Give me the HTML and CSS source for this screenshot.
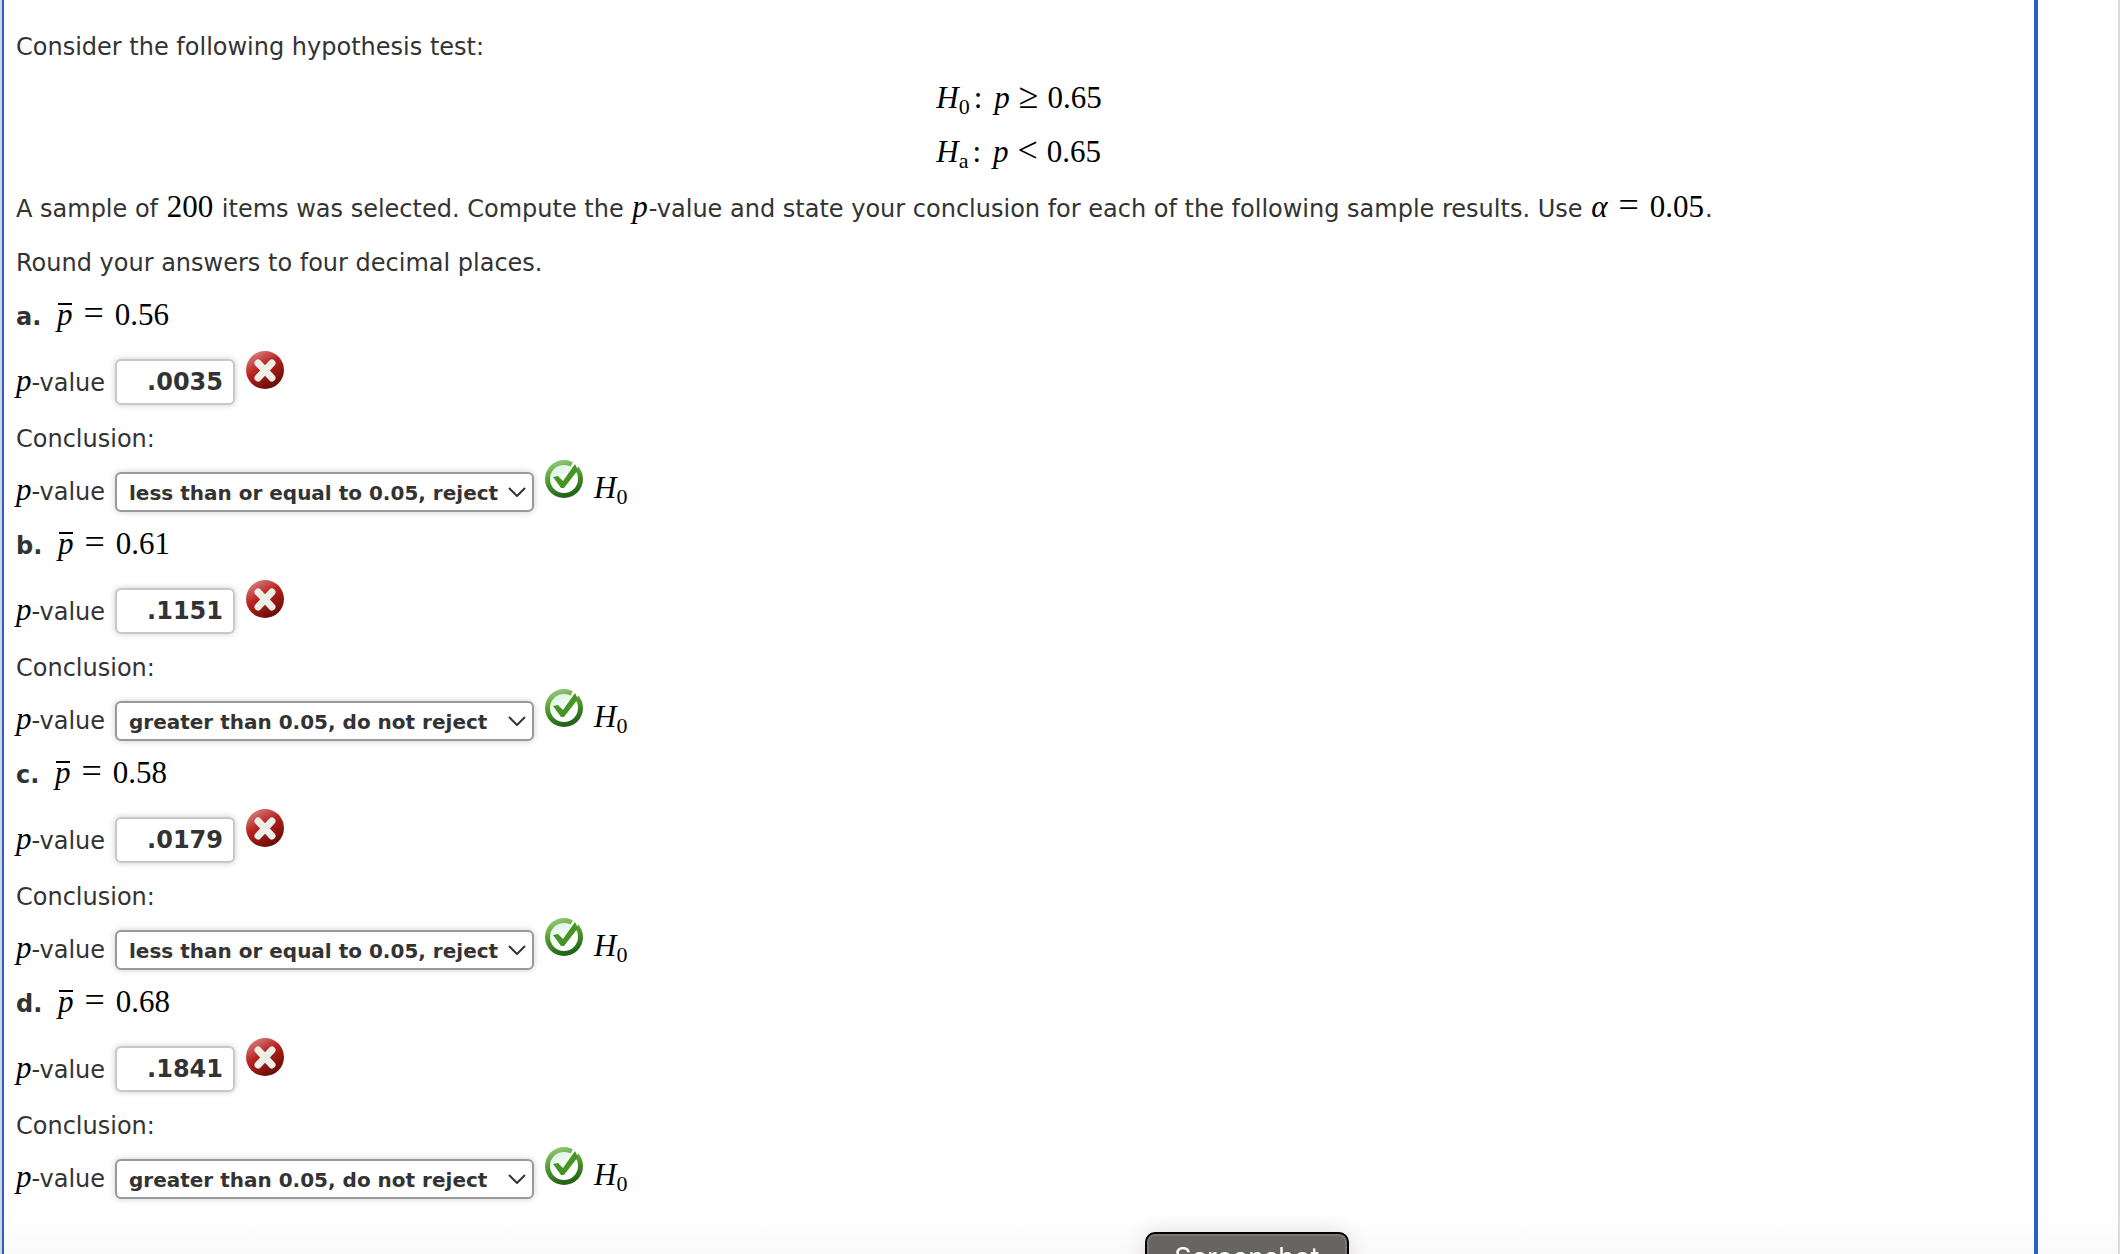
FILE: index.html
```html
<!DOCTYPE html>
<html lang="en">
<head>
 <meta charset="UTF-8">
 <title>Hypothesis test</title>
 <link rel="stylesheet" href="styles.css">
</head>
<body>
 <svg class="defs" aria-hidden="true">
 <defs>
 <linearGradient id="red" x1="0" y1="0" x2="0.6" y2="1">
 <stop offset="0" stop-color="#e09a9a"/>
 <stop offset="0.5" stop-color="#b9231f"/>
 <stop offset="1" stop-color="#6b0d08"/>
 </linearGradient>
 <linearGradient id="green" x1="0" y1="0" x2="0.3" y2="1">
 <stop offset="0" stop-color="#a3d08c"/>
 <stop offset="0.5" stop-color="#56a02f"/>
 <stop offset="1" stop-color="#24651a"/>
 </linearGradient>
 <linearGradient id="mint" x1="0" y1="0" x2="0.5" y2="1">
 <stop offset="0" stop-color="#d3f0dd"/>
 <stop offset="0.7" stop-color="#fff"/>
 </linearGradient>
 <symbol id="wrong" viewBox="0 0 38 38">
 <circle cx="19" cy="19" r="19" fill="url(#red)"/>
 <path d="M12 12L26 27M26 12L12 27" stroke="#eceee8" stroke-width="7" stroke-linecap="round"/>
 </symbol>
 <symbol id="right" viewBox="0 0 38 38">
 <circle cx="19" cy="19" r="19" fill="url(#green)"/>
 <circle cx="19" cy="19" r="14" fill="url(#mint)"/>
 <path d="M25 8L29 0L35 2L32 9" fill="#fff"/>
 <path d="M8 17L13 16L18 21L30 4L33 10L19 28L16 28Z" fill="#479424"/>
 </symbol>
 </defs>
 </svg>

 <main class="question">
 <p>Consider the following hypothesis test:</p>
 <div class="hypotheses">
 <p class="math"><i>H</i><sub>0</sub><span class="colon">:</span><i>p</i><span class="op">≥</span>0.65</p>
 <p class="math"><i>H</i><sub>a</sub><span class="colon">:</span><i>p</i><span class="op">&lt;</span>0.65</p>
 </div>
 <p>A sample of <span class="math inline">200</span> items was selected. Compute the <i class="math inline">p</i>-value and state your conclusion for each of the following sample results. Use <span class="math inline"><i>α</i><span class="op">=</span>0.05</span>.</p>
 <p>Round your answers to four decimal places.</p>

 <section class="part">
 <p><b>a.</b> <span class="math"><i class="bar">p</i><span class="op">=</span>0.56</span></p>
 <div class="row answer">
 <label for="a_value"><i class="math">p</i>-value</label>
 <input type="text" id="a_value" value=".0035">
 <svg class="mark" role="img" aria-label="Incorrect"><use href="#wrong"/></svg>
 </div>
 <p>Conclusion:</p>
 <div class="row conclusion">
 <label for="a_result"><i class="math">p</i>-value</label>
 <span class="choice">
 <select id="a_result">
 <option selected>less than or equal to 0.05, reject</option>
 <option>greater than 0.05, do not reject</option>
 </select>
 <svg class="chevron" viewBox="0 0 18 10"><path d="M1 1L9 9L17 1"/></svg>
 </span>
 <svg class="mark" role="img" aria-label="Correct"><use href="#right"/></svg>
 <span class="math"><i>H</i><sub>0</sub></span>
 </div>
 </section>

 <section class="part">
 <p><b>b.</b> <span class="math"><i class="bar">p</i><span class="op">=</span>0.61</span></p>
 <div class="row answer">
 <label for="b_value"><i class="math">p</i>-value</label>
 <input type="text" id="b_value" value=".1151">
 <svg class="mark" role="img" aria-label="Incorrect"><use href="#wrong"/></svg>
 </div>
 <p>Conclusion:</p>
 <div class="row conclusion">
 <label for="b_result"><i class="math">p</i>-value</label>
 <span class="choice">
 <select id="b_result">
 <option>less than or equal to 0.05, reject</option>
 <option selected>greater than 0.05, do not reject</option>
 </select>
 <svg class="chevron" viewBox="0 0 18 10"><path d="M1 1L9 9L17 1"/></svg>
 </span>
 <svg class="mark" role="img" aria-label="Correct"><use href="#right"/></svg>
 <span class="math"><i>H</i><sub>0</sub></span>
 </div>
 </section>

 <section class="part">
 <p><b>c.</b> <span class="math"><i class="bar">p</i><span class="op">=</span>0.58</span></p>
 <div class="row answer">
 <label for="c_value"><i class="math">p</i>-value</label>
 <input type="text" id="c_value" value=".0179">
 <svg class="mark" role="img" aria-label="Incorrect"><use href="#wrong"/></svg>
 </div>
 <p>Conclusion:</p>
 <div class="row conclusion">
 <label for="c_result"><i class="math">p</i>-value</label>
 <span class="choice">
 <select id="c_result">
 <option selected>less than or equal to 0.05, reject</option>
 <option>greater than 0.05, do not reject</option>
 </select>
 <svg class="chevron" viewBox="0 0 18 10"><path d="M1 1L9 9L17 1"/></svg>
 </span>
 <svg class="mark" role="img" aria-label="Correct"><use href="#right"/></svg>
 <span class="math"><i>H</i><sub>0</sub></span>
 </div>
 </section>

 <section class="part">
 <p><b>d.</b> <span class="math"><i class="bar">p</i><span class="op">=</span>0.68</span></p>
 <div class="row answer">
 <label for="d_value"><i class="math">p</i>-value</label>
 <input type="text" id="d_value" value=".1841">
 <svg class="mark" role="img" aria-label="Incorrect"><use href="#wrong"/></svg>
 </div>
 <p>Conclusion:</p>
 <div class="row conclusion">
 <label for="d_result"><i class="math">p</i>-value</label>
 <span class="choice">
 <select id="d_result">
 <option>less than or equal to 0.05, reject</option>
 <option selected>greater than 0.05, do not reject</option>
 </select>
 <svg class="chevron" viewBox="0 0 18 10"><path d="M1 1L9 9L17 1"/></svg>
 </span>
 <svg class="mark" role="img" aria-label="Correct"><use href="#right"/></svg>
 <span class="math"><i>H</i><sub>0</sub></span>
 </div>
 </section>
 </main>

 <div class="tooltip">Screenshot</div>
</body>
</html>
```
FILE: styles.css
```css
* {
box-sizing: border-box;
}
html {
height: 100%;
overflow: hidden;
}
body {
display: flex;
min-height: 100%;
margin: 0;
padding-right: 80px;
border-left: 2px solid #d5d5d5;
border-right: 2px solid #dcdcdc;
background: linear-gradient(to top, #f9f9f9, #fff 40px);
color: #333;
font-family: Verdana, "DejaVu Sans", sans-serif;
font-size: 24px;
line-height: 32px;
}
p {
margin: 0;
white-space: nowrap;
}
.defs {
position: absolute;
width: 0;
height: 0;
}
.question {
display: flex;
flex-direction: column;
flex: 1;
gap: 22px;
padding: 31px 12px;
border-left: 2px solid #2860c8;
border-right: 4px solid #2860c8;
}
.hypotheses {
display: flex;
flex-direction: column;
align-self: center;
gap: 28px;
padding-bottom: 6px;
}
.math {
color: #000;
font-family: "Liberation Serif", serif;
font-size: 31px;
line-height: 24px;
}
.hypotheses .math {
line-height: 26px;
}
.inline {
margin: 0 1px;
}
.math sub {
font-size: 22px;
line-height: 0;
vertical-align: -6px;
}
.colon {
margin: 0 12px 0 4px;
}
.op {
margin: 0 11px;
font-size: 36px;
line-height: 0;
}
.hypotheses .op {
margin: 0 9px;
}
.bar {
display: inline-block;
margin-left: 8px;
background: linear-gradient(#000, #000) no-repeat right top / 14px 2px;
}
/* one lettered sample result */
.part {
display: flex;
flex-direction: column;
gap: 18px;
margin-bottom: -4px;
}
.row {
display: flex;
align-items: flex-end;
}
.row label {
width: 99px;
white-space: nowrap;
}
.answer {
height: 54px;
}
.answer label {
padding-bottom: 6px;
}
.conclusion {
height: 52px;
margin-top: -13px;
}
.conclusion label {
padding-bottom: 4px;
}
.conclusion > .math {
margin-left: 11px;
padding-bottom: 12px;
}
input {
width: 120px;
height: 46px;
padding: 0 10px;
border: 2px solid #c8c8c8;
border-radius: 6px;
box-shadow: 0 0 6px #ccc;
background: #fff;
color: #333;
font: bold 24px Verdana, "DejaVu Sans", sans-serif;
text-align: right;
}
.choice {
display: grid;
align-items: center;
}
select {
grid-area: 1 / 1;
width: 419px;
height: 40px;
padding: 2px 12px 0;
border: 2px solid #999;
border-radius: 6px;
box-shadow: 0 0 6px #ccc;
appearance: none;
background: #fff;
color: #333;
font: bold 20px Verdana, "DejaVu Sans", sans-serif;
}
.chevron {
grid-area: 1 / 1;
justify-self: end;
width: 18px;
height: 10px;
margin-right: 8px;
fill: none;
stroke: #333;
stroke-width: 2;
pointer-events: none;
}
.mark {
align-self: flex-start;
width: 38px;
height: 38px;
margin-left: 11px;
}
.tooltip {
position: fixed;
bottom: -30px;
left: 54%;
width: 204px;
height: 52px;
padding-top: 8px;
border: 2px solid #000;
border-radius: 10px;
box-shadow: inset 0 0 0 2px #7c7777, 0 0 20px #ddd;
background: #696464;
color: #fff;
font-family: Inter, sans-serif;
font-size: 27px;
text-align: center;
}
```
